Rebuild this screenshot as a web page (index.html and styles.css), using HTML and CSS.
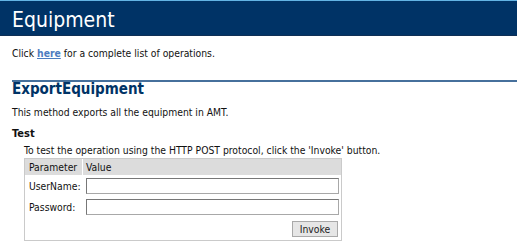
FILE: index.html
```html
<!DOCTYPE html>
<html lang="en">
<head>
    <meta charset="UTF-8">
    <title>Equipment Web Service</title>
    <link rel="stylesheet" href="styles.css">
</head>
<body>
    <div class="heading1">Equipment</div>

    <div class="content">
        <p class="intro">Click <a class="link" href="#">here</a> for a complete list of operations.</p>

        <h2>ExportEquipment</h2>
        <p class="desc">This method exports all the equipment in AMT.</p>

        <h3>Test</h3>
        <div class="test-block">
            <p class="hint">To test the operation using the HTTP POST protocol, click the 'Invoke' button.</p>
            <form action="#" method="POST">
                <table class="params" cellspacing="0" cellpadding="0">
                    <tr>
                        <th class="col-name">Parameter</th>
                        <th class="col-value">Value</th>
                    </tr>
                    <tr class="row-user">
                        <td class="col-name">UserName:</td>
                        <td class="col-value"><input class="field" type="text" name="UserName"></td>
                    </tr>
                    <tr class="row-pass">
                        <td class="col-name">Password:</td>
                        <td class="col-value"><input class="field" type="text" name="Password"></td>
                    </tr>
                    <tr class="row-submit">
                        <td></td>
                        <td class="col-value submit-cell"><input class="button" type="submit" value="Invoke"></td>
                    </tr>
                </table>
            </form>
        </div>
    </div>
</body>
</html>
```

FILE: styles.css
```css
body {
    margin: 0;
    color: #111;
    background-color: white;
    font-family: "DejaVu Sans Condensed", "DejaVu Sans", sans-serif;
    font-size: 10.3px;
}

.heading1 {
    height: 36px;
    box-sizing: border-box;
    border-top: 1px solid #63b4e4;
    border-bottom: 1px solid #0f2f55;
    background-color: #003366;
    color: #ffffff;
    font-size: 21px;
    line-height: 21px;
    padding: 9px 0 0 12px;
}

.content {
    padding-left: 12px;
}

p {
    margin: 0;
    line-height: 14px;
}

.intro {
    margin-top: 10px;
    margin-bottom: 20px;
}

a.link {
    color: #4c7cc0;
    font-weight: bold;
    text-decoration: underline;
}

h2 {
    margin: 0;
    border-top: 2px solid #46709c;
    color: #003366;
    font-size: 15px;
    line-height: 14px;
    padding-top: 0;
}

.desc {
    margin-top: 9px;
}

h3 {
    margin: 8px 0 0;
    font-size: 11px;
    line-height: 14px;
}

.test-block {
    margin-left: 12px;
}

.hint {
    margin-top: 2px;
    margin-bottom: 1px;
}

form {
    margin: 0;
}

/* parameter table */
.params {
    width: 318px;
    border: 1px solid #cacaca;
    border-collapse: separate;
    font-size: 10.3px;
}

.params th {
    height: 16px;
    background-color: #dcdcdc;
    font-weight: normal;
    text-align: left;
    padding: 0;
}

.params th.col-name {
    border-right: 1px solid #ffffff;
}

.params th.col-value {
    padding-left: 3px;
}

.col-name {
    width: 53px;
    padding-left: 4px !important;
}

.col-value {
    padding-left: 3px;
    padding-right: 2px;
}

.params td {
    padding-top: 0;
    padding-bottom: 0;
}

.row-user td {
    height: 21px;
}

.row-pass td {
    height: 22px;
}

.row-submit td {
    height: 22px;
}

.field {
    display: block;
    width: 253px;
    height: 16px;
    box-sizing: border-box;
    margin: 0;
    padding: 0 2px;
    border: 1px solid #777;
    border-right-color: #a8a8a8;
    border-bottom-color: #a8a8a8;
    font-family: inherit;
    font-size: 10px;
}

.submit-cell {
    text-align: right;
}

.button {
    width: 46px;
    height: 16px;
    margin: 0 1px 0 0;
    padding: 0;
    border: 1px solid #a9a9a9;
    background-color: #e6e6e6;
    color: #222;
    font-family: inherit;
    font-size: 10.3px;
}
```
